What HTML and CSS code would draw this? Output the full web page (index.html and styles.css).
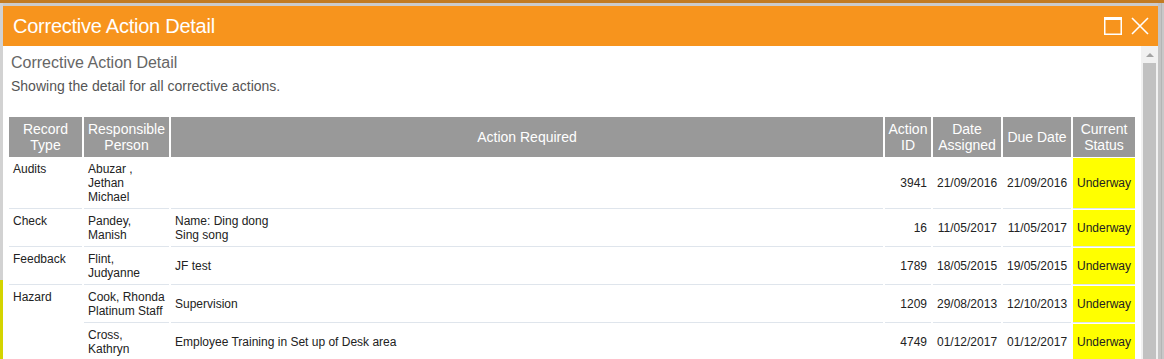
FILE: index.html
```html
<!DOCTYPE html>
<html>
<head>
<meta charset="utf-8">
<title>Corrective Action Detail</title>
<link rel="stylesheet" href="styles.css">
</head>
<body>
<div class="page">
  <div class="dialog">
    <div class="titlebar">
      <span class="title">Corrective Action Detail</span>
      <div class="controls">
        <svg class="icon" width="18" height="18" viewBox="0 0 18 18" aria-hidden="true">
          <rect x="0.75" y="0.75" width="16.5" height="16.5" fill="none" stroke="#fff" stroke-width="1.5"/>
          <rect x="0" y="0" width="18" height="3" fill="#fff"/>
        </svg>
        <svg class="icon" width="18" height="18" viewBox="0 0 18 18" aria-hidden="true">
          <path d="M1 1 L17 17 M17 1 L1 17" stroke="#fff" stroke-width="1.6" fill="none"/>
        </svg>
      </div>
    </div>
    <div class="body">
      <div class="main">
        <h2 class="subtitle">Corrective Action Detail</h2>
        <p class="desc">Showing the detail for all corrective actions.</p>
        <table class="grid">
          <thead>
            <tr>
              <th class="c1">Record Type</th>
              <th class="c2">Responsible Person</th>
              <th class="c3">Action Required</th>
              <th class="c4">Action ID</th>
              <th class="c5">Date Assigned</th>
              <th class="c6">Due Date</th>
              <th class="c7">Current Status</th>
            </tr>
          </thead>
          <tbody>
            <tr>
              <td class="type">Audits</td>
              <td>Abuzar ,<br>Jethan<br>Michael</td>
              <td></td>
              <td class="num">3941</td>
              <td class="num">21/09/2016</td>
              <td class="num">21/09/2016</td>
              <td class="status">Underway</td>
            </tr>
            <tr>
              <td class="type">Check</td>
              <td>Pandey,<br>Manish</td>
              <td>Name: Ding dong<br>Sing song</td>
              <td class="num">16</td>
              <td class="num">11/05/2017</td>
              <td class="num">11/05/2017</td>
              <td class="status">Underway</td>
            </tr>
            <tr>
              <td class="type">Feedback</td>
              <td>Flint,<br>Judyanne</td>
              <td>JF test</td>
              <td class="num">1789</td>
              <td class="num">18/05/2015</td>
              <td class="num">19/05/2015</td>
              <td class="status">Underway</td>
            </tr>
            <tr>
              <td class="type" rowspan="2">Hazard</td>
              <td>Cook, Rhonda<br>Platinum Staff</td>
              <td>Supervision</td>
              <td class="num">1209</td>
              <td class="num">29/08/2013</td>
              <td class="num">12/10/2013</td>
              <td class="status">Underway</td>
            </tr>
            <tr>
              <td>Cross,<br>Kathryn</td>
              <td>Employee Training in Set up of Desk area</td>
              <td class="num">4749</td>
              <td class="num">01/12/2017</td>
              <td class="num">01/12/2017</td>
              <td class="status">Underway</td>
            </tr>
          </tbody>
        </table>
      </div>
      <div class="scrollbar">
        <div class="sb-button"><span class="sb-arrow"></span></div>
        <div class="sb-thumb"></div>
      </div>
    </div>
  </div>
</div>
</body>
</html>
```

FILE: styles.css
```css
html, body {
  margin: 0;
  padding: 0;
  height: 359px;
  overflow: hidden;
}

body {
  font-family: "Liberation Sans", Arial, sans-serif;
  background: #cbcbcb;
}

.page {
  border-top: 3px solid #c27b22;
  padding: 3px 6px 0 3px;
  height: 400px;
  background:
    linear-gradient(to bottom, #d2d2d2 0, #d2d2d2 277px, #d4d400 277px) left top / 3px 100% no-repeat,
    linear-gradient(to right, #c4c4c4 0, #c4c4c4 3px, #b5b5b5 3px, #b5b5b5 4px, #c8c8c8 4px) right top / 6px 100% no-repeat,
    #cbcbcb;
}

.dialog {
  background: #fff;
  display: flex;
  flex-direction: column;
  height: 400px;
}

.titlebar {
  height: 40px;
  flex: none;
  background: #f7941d;
  display: flex;
  align-items: center;
  justify-content: space-between;
  padding: 0 9px 0 10px;
}

.title {
  color: #fff;
  font-size: 20px;
  line-height: 40px;
  letter-spacing: -0.25px;
}

.controls {
  display: flex;
  align-items: center;
  gap: 9px;
}

.icon {
  display: block;
}

.body {
  display: flex;
  flex: 1;
}

.main {
  flex: 1;
  padding: 7px 4px 0 4px;
  min-width: 0;
}

.subtitle {
  margin: 0 0 4px 4px;
  font-size: 16px;
  line-height: 20px;
  font-weight: normal;
  color: #666;
}

.desc {
  margin: 0 0 0 4px;
  font-size: 14px;
  line-height: 18px;
  color: #555;
}

.grid {
  margin-top: 21px;
  width: 100%;
  table-layout: fixed;
  border-collapse: separate;
  border-spacing: 2px 1px;
}

.grid th {
  box-sizing: border-box;
  background: #999;
  color: #fff;
  font-weight: normal;
  font-size: 14px;
  line-height: 16px;
  padding: 4px 3px;
  text-align: center;
  vertical-align: middle;
}

.c1 { width: 73px; }
.c2 { width: 85px; }
.c4 { width: 46px; }
.c5 { width: 68px; }
.c6 { width: 68px; }
.c7 { width: 62px; }

.grid td {
  font-size: 12px;
  line-height: 14px;
  color: #222;
  padding: 4px;
  border-bottom: 1px solid #dfe5ec;
  vertical-align: middle;
  text-align: left;
}

.grid td.type {
  vertical-align: top;
}

.grid td.num {
  text-align: right;
}

.grid td.status {
  background: #ffff00;
}

.scrollbar {
  width: 17px;
  flex: none;
  background: #f1f1f1;
  display: flex;
  flex-direction: column;
}

.sb-button {
  height: 17px;
  display: flex;
  justify-content: center;
  align-items: center;
}

.sb-arrow {
  width: 0;
  height: 0;
  border-left: 4px solid transparent;
  border-right: 4px solid transparent;
  border-bottom: 4px solid #a3a3a3;
}

.sb-thumb {
  flex: 1;
  margin: 0 2px;
  background: #c1c1c1;
}
```
